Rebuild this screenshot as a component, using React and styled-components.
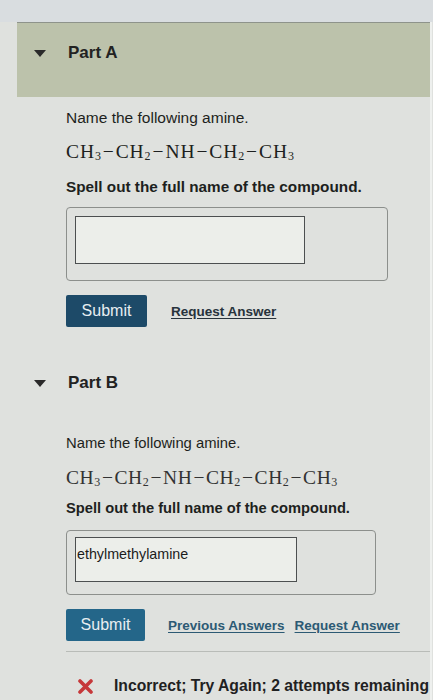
import React from 'react';
import styled, { createGlobalStyle } from 'styled-components';

const Global = createGlobalStyle`
  html, body {
    margin: 0;
    padding: 0;
    background: #dfe1de;
    font-family: "Liberation Sans", Arial, sans-serif;
    color: #1d1f20;
  }
`

const Page = styled.div`
  width: 433px;
  height: 700px;
  overflow: hidden;
  display: flex;
  flex-direction: column;
`

const TopStrip = styled.div`
  height: 22px;
  background: #d9dde0;
  flex-shrink: 0;
`

const Panel = styled.div`
  margin-left: 17px;
  width: 413px;
  border-right: 2px solid #eef0ee;
  display: flex;
  flex-direction: column;
  flex: 1;
`

const PartHeader = styled.div`
  display: flex;
  align-items: ${p => p.$open ? 'flex-start' : 'center'};
  gap: 22px;
  padding-left: 17px;
  padding-top: ${p => p.$open ? '20px' : '0'};
  box-sizing: border-box;
  height: ${p => p.$open ? '75px' : '30px'};
  margin-top: ${p => p.$gap || 0}px;
  background: ${p => p.$open ? '#bcc2ab' : 'transparent'};
  border-top: ${p => p.$open ? '1px solid #8e938b' : 'none'};
  font-size: 17px;
  line-height: 20px;
  font-weight: bold;
  color: #222;
`

const Caret = styled.span`
  width: 0;
  height: 0;
  margin-top: ${p => p.$top || 0}px;
  border-left: 6px solid transparent;
  border-right: 6px solid transparent;
  border-top: 7px solid #2a2a2a;
`

const Body = styled.div`
  padding-left: 49px;
  display: flex;
  flex-direction: column;
  align-items: flex-start;
`

const Prompt = styled.div`
  font-size: ${p => p.$size || 15}px;
  line-height: 20px;
  margin-top: ${p => p.$gap}px;
  font-weight: ${p => p.$bold ? 'bold' : 'normal'};
  white-space: nowrap;
`

const Formula = styled.div`
  font-family: "Liberation Serif", "Times New Roman", serif;
  font-size: 19.5px;
  letter-spacing: ${p => p.$spacing}px;
  line-height: 22px;
  margin-top: ${p => p.$gap}px;
  color: ${p => p.$light ? '#333' : '#1d1f20'};
  white-space: nowrap;
  sub {
    font-size: 12px;
    vertical-align: -2px;
    line-height: 0;
  }
`

const Bond = styled.span`
  margin: 0 1px;
`

const AnswerBox = styled.div`
  margin-top: ${p => p.$gap}px;
  width: ${p => p.$w}px;
  box-sizing: border-box;
  border: 1px solid #8c8f8c;
  border-radius: 4px;
  padding: ${p => p.$pt}px 8px ${p => p.$pb}px 8px;
`

const Input = styled.div`
  width: ${p => p.$w}px;
  height: ${p => p.$h}px;
  box-sizing: border-box;
  border: 1.5px solid #4c4f50;
  background: #eceeea;
  font-size: 14.3px;
  padding: 8px 0 0 1px;
  color: #1b1b1b;
`

const ActionRow = styled.div`
  margin-top: 14px;
  display: flex;
  align-items: center;
  gap: ${p => p.$gap}px;
`

const SubmitButton = styled.button`
  width: ${p => p.$w}px;
  height: 32px;
  border: none;
  border-radius: 2px;
  background: ${p => p.$bg};
  color: #e8eef2;
  font-family: "Liberation Sans", Arial, sans-serif;
  font-size: 16px;
  padding: 0;
  margin-right: ${p => p.$mr}px;
`

const LinkText = styled.a`
  font-size: 13.5px;
  font-weight: bold;
  color: ${p => p.$color};
  text-decoration: underline;
  text-underline-offset: 2px;
`

const Divider = styled.div`
  margin-top: 10px;
  height: 1px;
  width: 364px;
  background: #b9bcb8;
`

const Feedback = styled.div`
  margin-top: 25px;
  margin-left: 12px;
  display: flex;
  align-items: center;
  gap: 21px;
  font-size: 15.7px;
  font-weight: bold;
  white-space: nowrap;
  color: #1f2122;
`

const CrossIcon = () => (
  <svg width="15" height="15" viewBox="0 0 15 15">
    <path d="M2 2 L13 13 M13 2 L2 13" stroke="#c6383a" strokeWidth="3.6" strokeLinecap="round" />
  </svg>
)

const chain = (groups) =>
  groups.map((g, i) => (
    <React.Fragment key={i}>
      {i > 0 && <Bond>−</Bond>}
      {g[0]}{g[1] && <sub>{g[1]}</sub>}
    </React.Fragment>
  ))

export default function App() {
  return (
    <Page>
      <Global />
      <TopStrip />
      <Panel>
        <PartHeader $open>
          <Caret $top={7} />
          Part A
        </PartHeader>
        <Body>
          <Prompt $gap={11} $size={15.5}>Name the following amine.</Prompt>
          <Formula $gap={13} $spacing={0.9}>
            {chain([['CH', '3'], ['CH', '2'], ['NH'], ['CH', '2'], ['CH', '3']])}
          </Formula>
          <Prompt $gap={14} $bold $size={15.3}>Spell out the full name of the compound.</Prompt>
          <AnswerBox $gap={10} $w={322} $pt={8} $pb={16}>
            <Input $w={230} $h={48} />
          </AnswerBox>
          <ActionRow $gap={0}>
            <SubmitButton $w={81} $bg="#1d4a68" $mr={24}>Submit</SubmitButton>
            <LinkText $color="#28333c">Request Answer</LinkText>
          </ActionRow>
        </Body>

        <PartHeader $gap={41}>
          <Caret />
          Part B
        </PartHeader>
        <Body>
          <Prompt $gap={35} $size={14.8}>Name the following amine.</Prompt>
          <Formula $gap={14} $light $spacing={0.6}>
            {chain([['CH', '3'], ['CH', '2'], ['NH'], ['CH', '2'], ['CH', '2'], ['CH', '3']])}
          </Formula>
          <Prompt $gap={9} $bold $size={14.7}>Spell out the full name of the compound.</Prompt>
          <AnswerBox $gap={12} $w={310} $pt={6} $pb={12}>
            <Input $w={222} $h={45}>ethylmethylamine</Input>
          </AnswerBox>
          <ActionRow $gap={10}>
            <SubmitButton $w={79} $bg="#246689" $mr={13}>Submit</SubmitButton>
            <LinkText $color="#2c5a74">Previous Answers</LinkText>
            <LinkText $color="#2c5a74">Request Answer</LinkText>
          </ActionRow>
          <Divider />
          <Feedback>
            <CrossIcon />
            Incorrect; Try Again; 2 attempts remaining
          </Feedback>
        </Body>
      </Panel>
    </Page>
  );
}
